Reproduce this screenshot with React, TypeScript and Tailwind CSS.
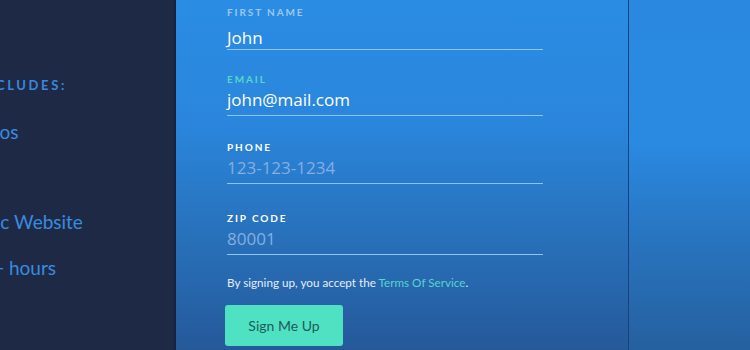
import React from 'react';

const font = { fontFamily: '"Lato", "Open Sans", sans-serif' };
const valueFont = { fontFamily: '"Open Sans", "Lato", sans-serif' };

function Field({ label, value, labelClass, valueClass, loose = false }: { label: string; value: string; labelClass: string; valueClass: string; loose?: boolean }) {
  return (
    <div className="flex flex-col">
      <span className={`text-[10px] leading-[14px] font-bold tracking-[0.19em] uppercase ${labelClass}`}>{label}</span>
      <div className={`border-b border-[#8fc3f2] ${loose ? 'mt-[8px] pb-0' : 'mt-[3px] pb-[4px]'}`}>
        <span className={`block text-[17px] leading-[22px] ${valueClass}`} style={valueFont}>{value}</span>
      </div>
    </div>
  );
}

export default function App() {
  return (
    <div className="flex w-[750px] h-[350px] overflow-hidden" style={font}>
      {/* package sidebar, scrolled off to the left */}
      <aside className="w-[176px] shrink-0 bg-[#1e2a45] overflow-hidden border-r-2 border-[#18223a]">
        <div className="pt-[76px] flex flex-col text-[#3a8ae0]">
          <span className="ml-[-23px] text-[13px] font-bold tracking-[0.2em] leading-[18px] text-[#3c87dc] whitespace-nowrap">INCLUDES:</span>
          <ul className="mt-[26px] flex flex-col text-[19px] leading-[24px] whitespace-nowrap">
            <li className="ml-[-30px]">Logos</li>
            <li className="mt-[22px] invisible">-</li>
            <li className="mt-[20px] ml-[-34px]">Basic Website</li>
            <li className="mt-[22px] ml-[-29px]">24+ hours</li>
          </ul>
        </div>
      </aside>

      {/* signup form */}
      <main className="w-[453px] shrink-0 bg-[linear-gradient(180deg,#2a8ce3_0%,#2a86dc_35%,#286fb8_70%,#25599a_100%)] border-r border-[#1d3f7a]">
        <form className="ml-[51px] w-[316px] pt-[5px] flex flex-col">
          <Field label="First Name" value="John" labelClass="text-[#9cc7f0]" valueClass="text-white" loose />
          <div className="mt-[22px]">
            <Field label="Email" value="john@mail.com" labelClass="text-[#56d8c8]" valueClass="text-white" />
          </div>
          <div className="mt-[24px]">
            <Field label="Phone" value="123-123-1234" labelClass="text-white" valueClass="text-[#86aee0]" />
          </div>
          <div className="mt-[27px]">
            <Field label="Zip Code" value="80001" labelClass="text-white" valueClass="text-[#86aee0]" />
          </div>
          <p className="mt-[19px] text-[11.7px] leading-[16px] text-[#e4eefb]">
            By signing up, you accept the <a className="text-[#55d4d2]">Terms Of Service</a>.
          </p>
          <button type="button" className="mt-[15px] ml-[-2px] w-[118px] h-[41px] rounded-[3px] bg-[#4fe2c2] text-[#1e5a5b] text-[14px]">
            Sign Me Up
          </button>
        </form>
      </main>

      {/* next panel */}
      <section className="flex-1 bg-[linear-gradient(180deg,#2a88e0_0%,#2a8ae2_40%,#2873bd_70%,#25609f_100%)]" />
    </div>
  );
}
